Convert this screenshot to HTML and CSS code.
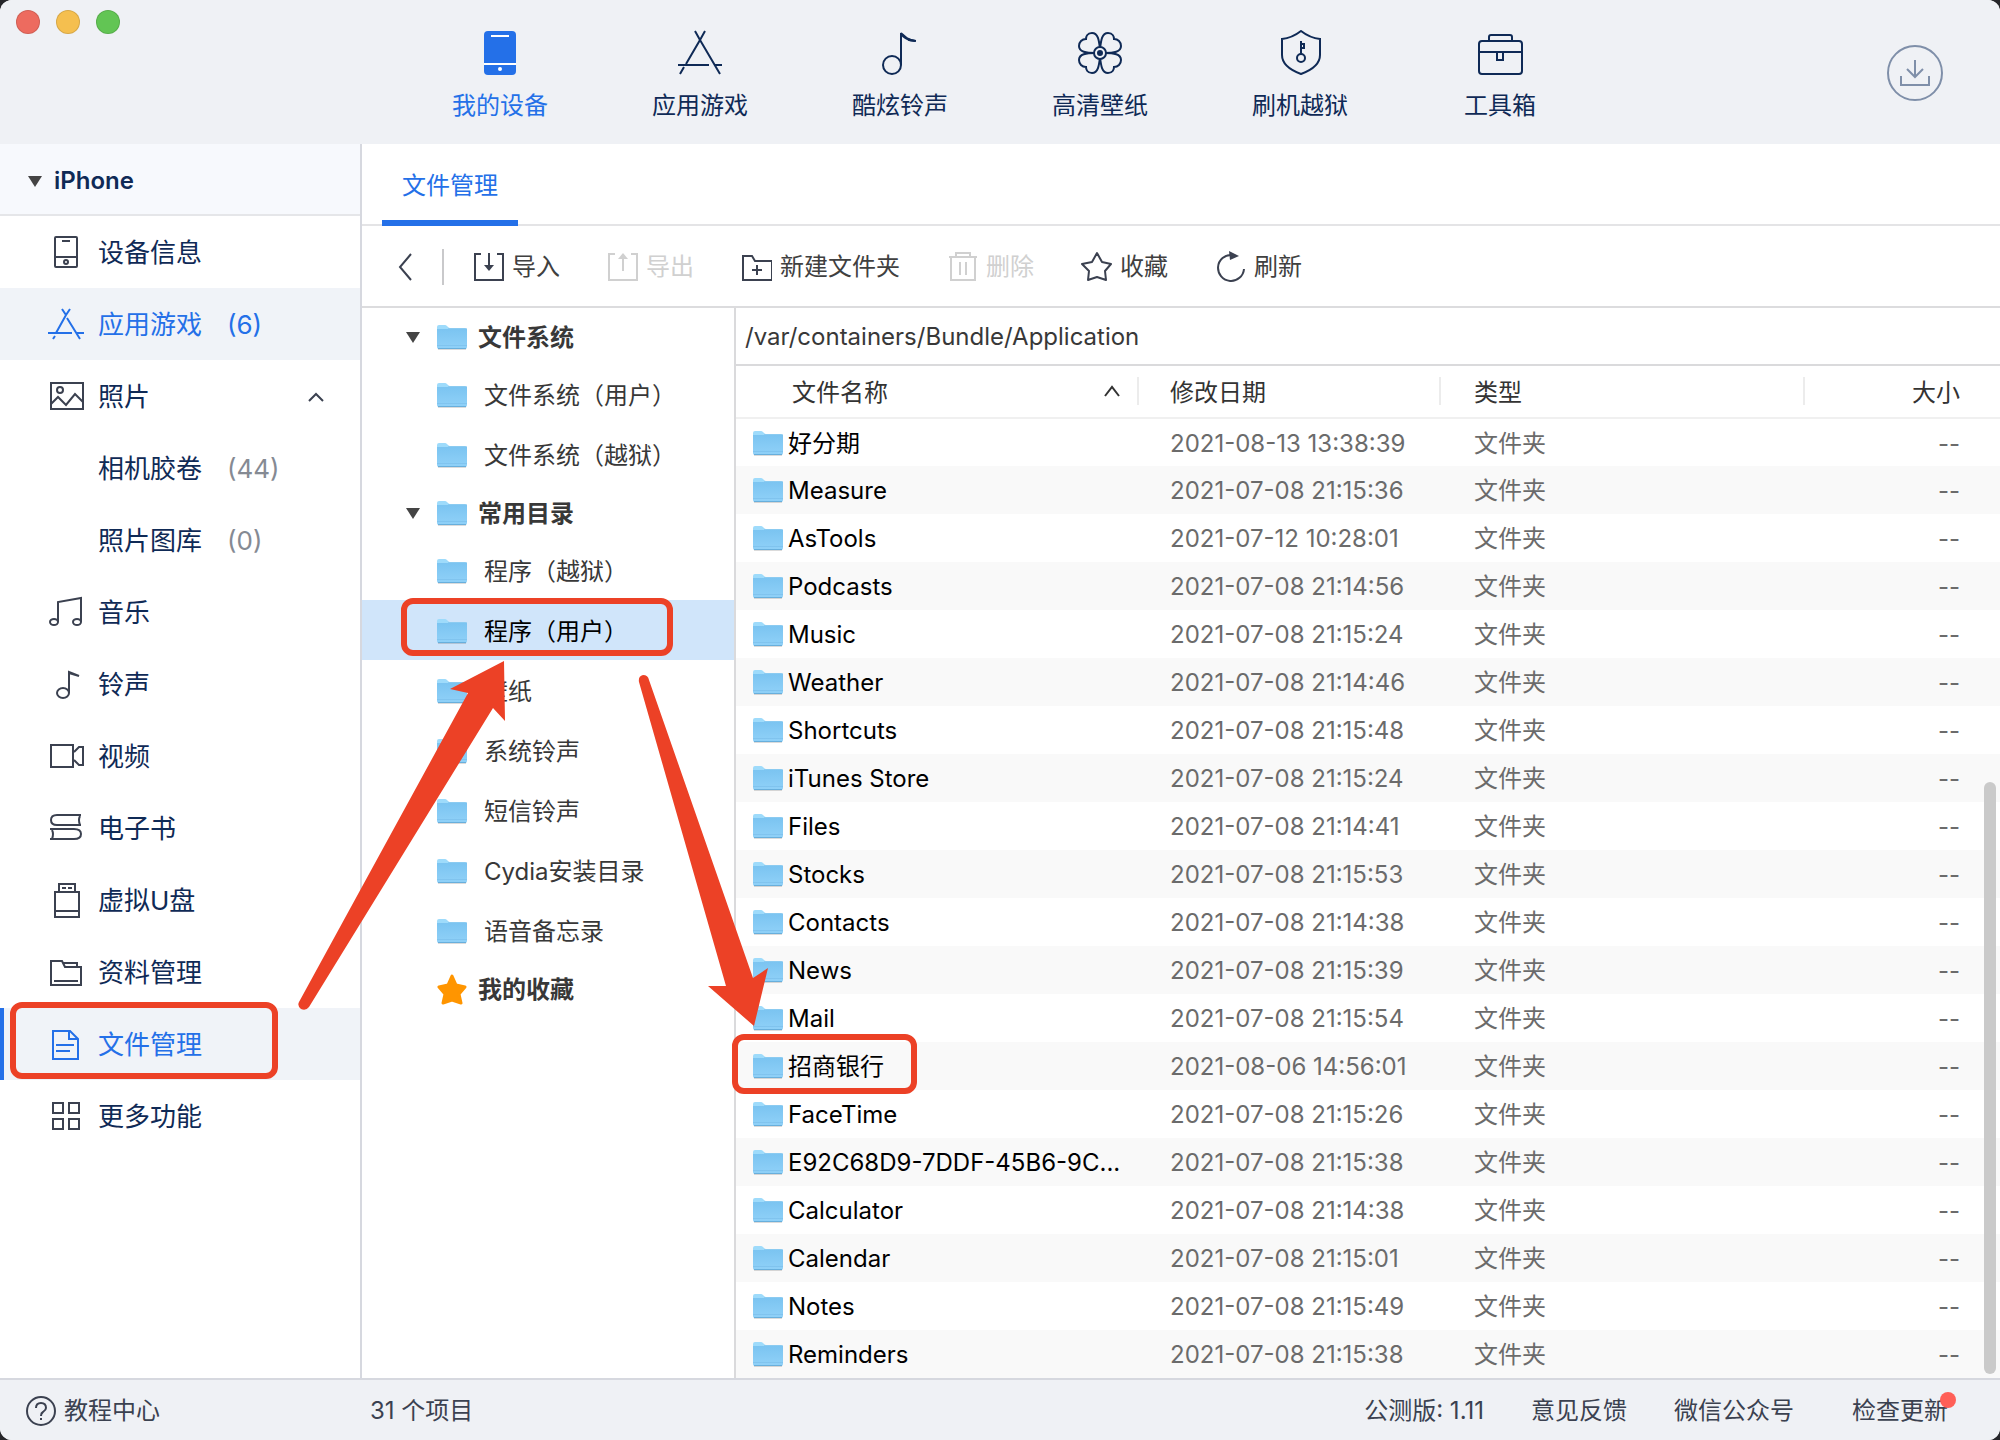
FILE: index.html
```html
<!doctype html>
<html lang="zh-CN">
<head>
	<meta charset="UTF-8" />
	<title>文件管理</title>
	<link rel="stylesheet" href="styles.css">
</head>
<body>
	<!-- 图标 -->
	<svg class="defs" width="0" height="0">
		<defs>
			<linearGradient id="blue" x1="0" y1="0" x2="0" y2="1">
				<stop offset="0" stop-color="#7bc4f1"/>
				<stop offset="1" stop-color="#90d1f8"/>
			</linearGradient>
			<symbol id="folder" viewBox="0 0 30 26">
				<path d="M1 24h28" stroke="#000" stroke-opacity=".14" stroke-width="2"/>
				<path d="M0 2q0-2 2-2h6q1 0 2 1l1 1q1 1 2 1h15q2 0 2 2v6H0z" fill="#9edbfb" stroke="none"/>
				<path d="M0 4h30v18q0 2-2 2H2q-2 0-2-2z" fill="url(#blue)" stroke="none"/>
				<path d="M11 3.5h19M0 20.5h30" stroke="#6db5e3" stroke-opacity=".4"/>
				<path d="M1 23.5h28" stroke="#68afdc"/>
			</symbol>
			<symbol id="apps" viewBox="0 0 36 34">
				<path d="M14 2l4 6M22 2l-4 6L8 26M19 11l13 21M0 26h24M28 26h8M7 29l-2 3"/>
			</symbol>
		</defs>
	</svg>

	<section id="wrap">
		<header id="top">
			<div class="lights">
				<button class="red" aria-label="关闭"></button>
				<button class="yellow" aria-label="最小化"></button>
				<button class="green" aria-label="缩放"></button>
			</div>
			<nav id="nav">
				<a href="#" class="active">
					<svg viewBox="0 0 46 46"><rect x="7" y="1" width="32" height="44" rx="4" fill="#2470e8" stroke="none"/><path d="M14 6h18M7 34h32" stroke="#fff"/><circle cx="23" cy="39" r="2" fill="#fff" stroke="none"/></svg>
					<span>我的设备</span>
				</a>
				<a href="#">
					<svg viewBox="0 0 46 46"><path d="M18 1l5 9M28 1l-5 9L9 34M7 37l-4 7M23 10l20 34M1 35h31M37 35h8"/></svg>
					<span>应用游戏</span>
				</a>
				<a href="#">
					<svg viewBox="0 0 46 46"><circle cx="15" cy="35" r="9"/><path d="M24 35V3q3 7 15 8"/><path d="M25 4q4 5 13 7l-6-1z"/></svg>
					<span>酷炫铃声</span>
				</a>
				<a href="#">
					<svg viewBox="-1 -1 46 46"><path d="M22 18C21 9 20 2 14 2c-5 0-6 4-6 6-4 0-7 3-7 7 0 6 7 7 17 7"/><path d="M22 18C23 9 24 2 30 2c5 0 6 4 6 6 4 0 7 3 7 7 0 6-7 7-17 7"/><path d="M22 26C21 35 20 42 14 42c-5 0-6-4-6-6-4 0-7-3-7-7 0-6 7-7 17-7"/><path d="M22 26C23 35 24 42 30 42c5 0 6-4 6-6 4 0 7-3 7-7 0-6-7-7-17-7"/><circle cx="22" cy="22" r="6" fill="#eff1f5"/><circle cx="22" cy="22" r="2" fill="#0f2a56"/></svg>
					<span>高清壁纸</span>
				</a>
				<a href="#">
					<svg viewBox="0 0 46 46"><path d="M24 1q9 7 19 8v16q0 12-19 19Q5 37 5 25V9q10-1 19-8z"/><circle cx="24" cy="28" r="4"/><path d="M24 24V11M24 14h3v4h-3"/></svg>
					<span>刷机越狱</span>
				</a>
				<a href="#">
					<svg viewBox="0 0 46 46"><rect x="2" y="11" width="43" height="33" rx="3"/><path d="M12 11V7q0-2 2-2h19q2 0 2 2v4M2 22h43M20 22v8h6v-8"/></svg>
					<span>工具箱</span>
				</a>
			</nav>
			<button class="download" aria-label="下载">
				<svg viewBox="0 0 56 56"><circle cx="28" cy="28" r="27"/><path d="M28 15v17M20 24l8 8 8-8M14 31v9h28v-9"/></svg>
			</button>
		</header>

		<div id="main">
			<aside id="side">
				<button class="device"><i class="arrow"></i>iPhone</button>
				<a href="#"><svg viewBox="0 0 36 36"><rect x="7" y="2" width="22" height="30" rx="1"/><path d="M14 6h8M7 22h22"/><circle cx="18" cy="27" r="2"/></svg>设备信息</a>
				<a href="#" class="hover"><svg viewBox="0 0 36 36"><use href="#apps" width="36" height="34"/></svg>应用游戏<em>(6)</em></a>
				<a href="#"><svg viewBox="0 0 36 36"><rect x="3" y="4" width="32" height="26"/><circle cx="12" cy="11" r="3"/><path d="M3 25l7-7 8 8 9-11 8 8"/></svg>照片<svg class="fold" viewBox="0 0 16 10"><path d="M1 9l7-7 7 7"/></svg></a>
				<a href="#" class="sub">相机胶卷<em>(44)</em></a>
				<a href="#" class="sub">照片图库<em>(0)</em></a>
				<a href="#"><svg viewBox="0 0 36 36"><ellipse cx="6" cy="27" rx="4" ry="3"/><ellipse cx="29" cy="27" rx="4" ry="3"/><path d="M10 27V7l23-4v24"/></svg>音乐</a>
				<a href="#"><svg viewBox="0 0 36 36"><ellipse cx="15" cy="26" rx="6" ry="5"/><path d="M21 26V5l10 4-10-3"/></svg>铃声</a>
				<a href="#"><svg viewBox="0 0 36 36"><path d="M3 6h22v22H3zM26 13l5-5h4v18h-4l-5-5"/></svg>视频</a>
				<a href="#"><svg viewBox="0 0 36 36"><path d="M33 4H9q-6 0-6 5t6 5h24M32 5q-2 4 0 9M2 18h24q7 0 7 5t-7 5H2M4 19q2 4 0 9"/></svg>电子书</a>
				<a href="#"><svg viewBox="0 0 36 36"><path d="M7 9h24v25H7zM11 9V1h16v8M7 28h24M14 5h4M20 5h4"/></svg>虚拟U盘</a>
				<a href="#"><svg viewBox="0 0 36 36"><path d="M3 6h11l3 6h16v18H3zM15 8h14v4M6 26h24"/></svg>资料管理</a>
				<a href="#" class="active"><svg viewBox="0 0 36 36"><path d="M5 4h17l8 8v20H5zM21 4v8h9M8 18h18M8 24h14"/></svg>文件管理</a>
				<a href="#"><svg viewBox="0 0 36 36"><path d="M5 4h10v10H5zM21 4h10v10H21zM5 20h10v10H5zM21 20h10v10H21z"/></svg>更多功能</a>
			</aside>

			<div id="content">
				<div class="tabs"><a href="#" class="active">文件管理</a></div>
				<div class="tools">
					<button class="back" aria-label="返回"><svg viewBox="0 0 14 30"><path d="M13 2L2 15l11 13"/></svg></button>
					<button><svg viewBox="0 0 32 32"><path d="M9 3H3v26h28V3h-6M17 2v16"/><path class="fill" d="M12 14h10l-5 6z"/></svg>导入</button>
					<button disabled><svg viewBox="0 0 32 32"><path d="M9 3H3v26h28V3h-6M17 20V6"/><path class="fill" d="M12 8h10l-5-6z"/></svg>导出</button>
					<button><svg viewBox="0 0 32 32"><path d="M3 5h9l3 5h17v19H3zM17 14v10M12 19h10"/></svg>新建文件夹</button>
					<button disabled><svg viewBox="0 0 32 32"><path d="M3 6h28M10 6V2h14v4M5 6v23h24V6M14 11v13M20 11v13"/></svg>删除</button>
					<button><svg viewBox="0 0 32 32"><path d="M17 2l5 9 9 2-6 7 1 9-9-3-9 3 1-9-7-7 10-2z" stroke-linejoin="round"/></svg>收藏</button>
					<button><svg viewBox="0 0 32 32"><path d="M18 4a13 13 0 1 0 12 14"/><path class="fill" d="M15 0l10 5-9 4z"/></svg>刷新</button>
				</div>

				<div class="panel">
					<ul id="tree">
						<li class="root"><i class="arrow"></i><svg class="folder"><use href="#folder"/></svg>文件系统</li>
						<li><svg class="folder"><use href="#folder"/></svg>文件系统（用户）</li>
						<li><svg class="folder"><use href="#folder"/></svg>文件系统（越狱）</li>
						<li class="root"><i class="arrow"></i><svg class="folder"><use href="#folder"/></svg>常用目录</li>
						<li><svg class="folder"><use href="#folder"/></svg>程序（越狱）</li>
						<li class="active"><svg class="folder"><use href="#folder"/></svg>程序（用户）</li>
						<li><svg class="folder"><use href="#folder"/></svg>壁纸</li>
						<li><svg class="folder"><use href="#folder"/></svg>系统铃声</li>
						<li><svg class="folder"><use href="#folder"/></svg>短信铃声</li>
						<li><svg class="folder"><use href="#folder"/></svg>Cydia安装目录</li>
						<li><svg class="folder"><use href="#folder"/></svg>语音备忘录</li>
						<li class="root"><svg class="star" viewBox="0 0 30 32"><path d="M15 2l4 9 9 2-6 7 2 9-9-3-9 3 2-9-6-7 9-2z"/></svg>我的收藏</li>
					</ul>

					<div id="files">
						<input class="path" type="text" aria-label="路径" value="/var/containers/Bundle/Application">
						<div class="list">
							<table>
								<thead>
									<tr>
										<th class="name">文件名称<svg viewBox="0 0 16 12"><path d="M1 11l7-9 7 9"/></svg></th>
										<th class="date">修改日期</th>
										<th class="type">类型</th>
										<th class="size">大小</th>
									</tr>
								</thead>
								<tbody>
									<tr><td><svg class="folder"><use href="#folder"/></svg>好分期</td><td>2021-08-13 13:38:39</td><td>文件夹</td><td>--</td></tr>
									<tr><td><svg class="folder"><use href="#folder"/></svg>Measure</td><td>2021-07-08 21:15:36</td><td>文件夹</td><td>--</td></tr>
									<tr><td><svg class="folder"><use href="#folder"/></svg>AsTools</td><td>2021-07-12 10:28:01</td><td>文件夹</td><td>--</td></tr>
									<tr><td><svg class="folder"><use href="#folder"/></svg>Podcasts</td><td>2021-07-08 21:14:56</td><td>文件夹</td><td>--</td></tr>
									<tr><td><svg class="folder"><use href="#folder"/></svg>Music</td><td>2021-07-08 21:15:24</td><td>文件夹</td><td>--</td></tr>
									<tr><td><svg class="folder"><use href="#folder"/></svg>Weather</td><td>2021-07-08 21:14:46</td><td>文件夹</td><td>--</td></tr>
									<tr><td><svg class="folder"><use href="#folder"/></svg>Shortcuts</td><td>2021-07-08 21:15:48</td><td>文件夹</td><td>--</td></tr>
									<tr><td><svg class="folder"><use href="#folder"/></svg>iTunes Store</td><td>2021-07-08 21:15:24</td><td>文件夹</td><td>--</td></tr>
									<tr><td><svg class="folder"><use href="#folder"/></svg>Files</td><td>2021-07-08 21:14:41</td><td>文件夹</td><td>--</td></tr>
									<tr><td><svg class="folder"><use href="#folder"/></svg>Stocks</td><td>2021-07-08 21:15:53</td><td>文件夹</td><td>--</td></tr>
									<tr><td><svg class="folder"><use href="#folder"/></svg>Contacts</td><td>2021-07-08 21:14:38</td><td>文件夹</td><td>--</td></tr>
									<tr><td><svg class="folder"><use href="#folder"/></svg>News</td><td>2021-07-08 21:15:39</td><td>文件夹</td><td>--</td></tr>
									<tr><td><svg class="folder"><use href="#folder"/></svg>Mail</td><td>2021-07-08 21:15:54</td><td>文件夹</td><td>--</td></tr>
									<tr><td><svg class="folder"><use href="#folder"/></svg>招商银行</td><td>2021-08-06 14:56:01</td><td>文件夹</td><td>--</td></tr>
									<tr><td><svg class="folder"><use href="#folder"/></svg>FaceTime</td><td>2021-07-08 21:15:26</td><td>文件夹</td><td>--</td></tr>
									<tr><td><svg class="folder"><use href="#folder"/></svg>E92C68D9-7DDF-45B6-9C...</td><td>2021-07-08 21:15:38</td><td>文件夹</td><td>--</td></tr>
									<tr><td><svg class="folder"><use href="#folder"/></svg>Calculator</td><td>2021-07-08 21:14:38</td><td>文件夹</td><td>--</td></tr>
									<tr><td><svg class="folder"><use href="#folder"/></svg>Calendar</td><td>2021-07-08 21:15:01</td><td>文件夹</td><td>--</td></tr>
									<tr><td><svg class="folder"><use href="#folder"/></svg>Notes</td><td>2021-07-08 21:15:49</td><td>文件夹</td><td>--</td></tr>
									<tr><td><svg class="folder"><use href="#folder"/></svg>Reminders</td><td>2021-07-08 21:15:38</td><td>文件夹</td><td>--</td></tr>
								</tbody>
							</table>
							<i class="bar"></i>
						</div>
					</div>
				</div>
			</div>
		</div>

		<footer id="foot">
			<a href="#" class="help"><svg viewBox="0 0 32 32"><circle cx="16" cy="16" r="14"/><path d="M11 13q0-5 5-5t5 5q0 2-3 4-2 1-2 4M16 23v2"/></svg>教程中心</a>
			<span class="count">31 个项目</span>
			<span>公测版: 1.11</span>
			<a href="#">意见反馈</a>
			<a href="#">微信公众号</a>
			<a href="#" class="update">检查更新</a>
		</footer>

		<!-- 操作步骤标注 -->
		<svg id="mark" width="2000" height="1440" viewBox="0 0 2000 1440">
			<rect x="13" y="1005" width="262" height="71" rx="9"/>
			<rect x="404" y="601" width="266" height="52" rx="9"/>
			<rect x="735" y="1037" width="179" height="54" rx="9"/>
			<path d="M299 1002L468 693l-18-4 54-28 1 60-12-13L309 1007q-3 4-8 2-4-3-2-7z"/>
			<path d="M639 682q-1-6 4-7 5 0 6 5L753 978l15-10-14 58-46-40h18z"/>
		</svg>
	</section>
</body>
</html>
```
FILE: styles.css
```css
*{
	margin: 0;
	padding: 0;
	box-sizing: border-box;
}
body{
	background: #26262a;
	font-family: Inter, "Noto Sans CJK SC", sans-serif;
	font-size: 24px;
	line-height: 36px;
	color: #3b4150;
}
a{
	color: inherit;
	text-decoration: none;
}
button, input{
	font: inherit;
	color: inherit;
	border: 0;
	background: none;
}
svg{
	fill: none;
	stroke: currentColor;
	stroke-width: 2px;
	flex: none;
}
.defs{
	position: absolute;
}
#wrap{
	position: relative;
	display: flex;
	flex-direction: column;
	min-height: 100vh;
	border-radius: 12px;
	overflow: hidden;
	background: #fff;
}

/* 顶部导航 */
#top{
	display: grid;
	grid-template-columns: 400px 1fr 400px;
	height: 144px;
	background: #eff1f5;
}
.lights{
	display: flex;
	gap: 16px;
	padding: 10px 16px;
}
.lights button{
	width: 24px;
	height: 24px;
	border-radius: 50%;
	border: 1px solid rgba(0,0,0,.12);
}
.red{ background: #ed6b5f; }
.yellow{ background: #f5bf4f; }
.green{ background: #62c554; }
#nav{
	display: flex;
	color: #0f2a56;
}
#nav a{
	flex: 1;
	display: flex;
	flex-direction: column;
	align-items: center;
	gap: 12px;
	padding-top: 30px;
}
#nav svg{
	width: 46px;
	height: 46px;
}
#nav a.active, .tabs a.active{
	color: #2470e8;
}
.download{
	justify-self: end;
	align-self: start;
	width: 56px;
	height: 56px;
	margin: 45px 57px 0 0;
	color: #7f8fa9;
}
.download svg{
	display: block;
}

#main{
	display: flex;
	flex: 1;
}

/* 左侧菜单 */
#side{
	width: 362px;
	border-right: 2px solid #d6d8df;
	color: #0f2a56;
	font-size: 26px;
}
.device{
	display: flex;
	align-items: center;
	gap: 12px;
	width: 100%;
	height: 72px;
	padding: 4px 0 0 28px;
	border-bottom: 2px solid #e5e6e9;
	background: #f7f9fd;
	font-size: 24px;
	font-weight: 600;
}
.arrow{
	border: 7px solid transparent;
	border-top: 11px solid #444;
	border-bottom: 0;
}
#side a{
	display: flex;
	align-items: center;
	height: 72px;
	padding: 2px 0 0 48px;
}
#side a svg{
	width: 36px;
	height: 36px;
	margin-right: 14px;
	color: #3b4150;
}
#side a.sub{
	padding-left: 98px;
}
#side em{
	margin-left: 25px;
	font-style: normal;
	color: #858a93;
}
#side a .fold{
	width: 16px;
	height: 10px;
	margin: 0 36px 0 auto;
}
#side a.hover, #side a.active{
	background: #f0f3f8;
}
#side a.hover, #side a.active, #side a.hover *, #side a.active svg{
	color: #2470e8;
}
#side a.active{
	box-shadow: inset 4px 0 #2470e8;
}

/* 内容区 */
#content{
	flex: 1;
	min-width: 0;
	display: flex;
	flex-direction: column;
}
.tabs{
	height: 82px;
	padding-left: 20px;
	border-bottom: 2px solid #e4e4e6;
}
.tabs a{
	display: inline-block;
	height: 82px;
	padding: 0 20px;
	line-height: 84px;
	border-bottom: 6px solid #2470e8;
}
.tools{
	display: flex;
	align-items: center;
	gap: 46px;
	height: 82px;
	padding: 2px 0 0 36px;
	border-bottom: 2px solid #dcdcde;
}
.tools button{
	display: flex;
	align-items: center;
	gap: 8px;
	color: #404040;
}
.tools svg{
	width: 32px;
	height: 32px;
	color: #3b4150;
}
.tools .fill{
	fill: currentColor;
	stroke: none;
}
.tools button:disabled, .tools button:disabled svg{
	color: #d0d0d0;
}
.tools .back{
	height: 36px;
	padding-right: 30px;
	margin-right: -18px;
	border-right: 2px solid #c9c9cb;
}
.tools .back svg{
	width: 14px;
	height: 30px;
}
.panel{
	display: flex;
	flex: 1;
}

/* 目录树 */
#tree{
	width: 374px;
	border-right: 2px solid #dadadc;
	list-style: none;
	color: #383838;
}
#tree li{
	display: flex;
	align-items: center;
	gap: 17px;
	height: 60px;
	padding: 3px 0 0 75px;
}
#tree li.root{
	position: relative;
	height: 56px;
	gap: 11px;
	font-weight: 600;
}
#tree .arrow{
	position: absolute;
	left: 44px;
}
#tree li.active{
	background: #d0e5fa;
	color: #000;
}
.folder{
	width: 30px;
	height: 26px;
	stroke-width: 1px;
}
.star{
	width: 30px;
	height: 32px;
	fill: #ff9500;
	stroke: #ff9500;
	stroke-width: 3px;
	stroke-linejoin: round;
}

/* 文件列表 */
#files{
	flex: 1;
	min-width: 0;
}
.path{
	display: block;
	width: 100%;
	height: 58px;
	padding: 0 9px;
	border-bottom: 2px solid #dadadc;
	color: #383838;
}
.list{
	position: relative;
}
table{
	width: 100%;
	table-layout: fixed;
	border-collapse: collapse;
	white-space: nowrap;
}
th{
	position: relative;
	height: 52px;
	padding: 3px 0 0 34px;
	border-bottom: 2px solid #f0f0f0;
	font-weight: 400;
	text-align: left;
	color: #333;
}
th:not(:last-child)::after{
	content: "";
	position: absolute;
	right: -1px;
	top: 11px;
	width: 2px;
	height: 28px;
	background: #ececec;
}
th svg{
	float: right;
	width: 16px;
	height: 12px;
	margin: 10px 18px 0 0;
}
.name{ width: 402px; padding-left: 56px; }
.date{ width: 302px; }
.type{ width: 364px; }
td{
	height: 48px;
	padding: 2px 0 0 34px;
	color: #6b6b6b;
}
td:first-child{
	padding-left: 17px;
	color: #000;
}
th:nth-child(2), td:nth-child(2){
	padding-left: 32px;
}
td .folder{
	margin-right: 5px;
	vertical-align: -5px;
}
th:last-child, td:last-child{
	padding-right: 40px;
	text-align: right;
}
tbody tr:nth-child(even){
	background: #f9f9f9;
}
.bar{
	position: absolute;
	right: 4px;
	top: 416px;
	bottom: 4px;
	width: 12px;
	border-radius: 6px;
	background: #cacaca;
}

/* 底部状态栏 */
#foot{
	display: flex;
	align-items: center;
	gap: 47px;
	height: 62px;
	padding: 2px 52px 0 0;
	border-top: 2px solid #d6d8df;
	background: #eff1f5;
}
.help{
	display: flex;
	align-items: center;
	gap: 7px;
	width: 323px;
	padding-left: 25px;
}
.help svg{
	width: 32px;
	height: 32px;
}
.count{
	margin-right: auto;
}
.update{
	position: relative;
	margin-left: 11px;
}
.update::after{
	content: "";
	position: absolute;
	right: -8px;
	top: -1px;
	width: 16px;
	height: 16px;
	border-radius: 50%;
	background: #ff5f57;
}

#mark{
	position: absolute;
	left: 0;
	top: 0;
	pointer-events: none;
	stroke: none;
}
#mark rect{
	stroke: #ec4126;
	stroke-width: 6px;
}
#mark path{
	fill: #ec4126;
}
```
